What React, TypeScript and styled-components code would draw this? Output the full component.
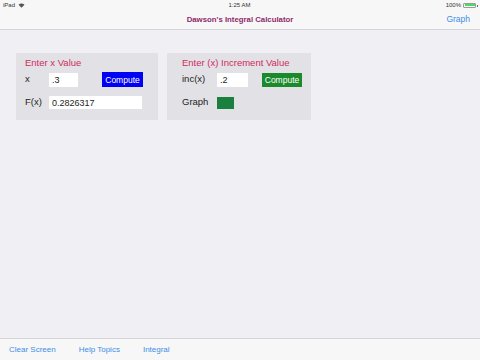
import React from "react";
import styled, { createGlobalStyle } from "styled-components";

const Global = createGlobalStyle`
  html, body { margin: 0; padding: 0; }
  body { font-family: "Liberation Sans", Arial, sans-serif; background: #efeff4; }
  * { box-sizing: border-box; }
`;

const Screen = styled.div`
  width: 480px;
  height: 360px;
  display: flex;
  flex-direction: column;
  background: #efeff4;
  overflow: hidden;
`;

const TopBar = styled.div`
  background: #f7f7f7;
  border-bottom: 1px solid #d6d6da;
  height: 30px;
  display: flex;
  flex-direction: column;
`;

const StatusBar = styled.div`
  height: 10px;
  display: grid;
  grid-template-columns: 1fr auto 1fr;
  align-items: center;
  padding: 0 4px 0 3px;
  font-size: 6px;
  color: #333;
`;

const StatusLeft = styled.div`
  display: flex;
  align-items: center;
  gap: 3px;
`;

const StatusRight = styled.div`
  display: flex;
  align-items: center;
  justify-content: flex-end;
  gap: 2px;
`;

const Battery = styled.div`
  width: 13px;
  height: 5px;
  border: 1px solid #9a9a9a;
  border-radius: 1px;
  padding: 0.5px;
  position: relative;
  &::before {
    content: "";
    display: block;
    width: 100%;
    height: 100%;
    background: #4cd964;
  }
  &::after {
    content: "";
    position: absolute;
    right: -3px;
    top: 1px;
    width: 1px;
    height: 2px;
    background: #666;
  }
`;

const NavBar = styled.div`
  flex: 1;
  display: grid;
  grid-template-columns: 1fr auto 1fr;
  align-items: center;
  padding: 0 10px 0 10px;
`;

const NavTitle = styled.div`
  font-size: 7.8px;
  font-weight: bold;
  color: #8e2a6a;
  padding-bottom: 1px;
`;

const NavButton = styled.div`
  justify-self: end;
  font-size: 8.5px;
  color: #3d8ee8;
  padding-bottom: 1px;
`;

const Content = styled.div`
  flex: 1;
  display: flex;
  align-items: flex-start;
  gap: 9px;
  padding: 23px 0 0 16px;
`;

const Panel = styled.div<{ $w: number; $pl: number }>`
  width: ${(p) => p.$w}px;
  height: 67px;
  background: #e2e2e6;
  padding: 3px 6px 0 ${(p) => p.$pl}px;
  display: flex;
  flex-direction: column;
`;

const PanelTitle = styled.div`
  font-size: 9.5px;
  line-height: 14px;
  color: #d12a5c;
  margin-bottom: 2px;
`;

const Row = styled.div<{ $mt?: number; $h: number }>`
  display: flex;
  align-items: center;
  height: ${(p) => p.$h}px;
  margin-top: ${(p) => p.$mt ?? 0}px;
`;

const Label = styled.div<{ $w: number }>`
  width: ${(p) => p.$w}px;
  font-size: 9.5px;
  color: #222;
  flex-shrink: 0;
  padding-bottom: 2px;
`;

const Field = styled.div<{ $w: number; $h: number }>`
  width: ${(p) => p.$w}px;
  height: ${(p) => p.$h}px;
  background: #fff;
  font-size: 9px;
  color: #222;
  display: flex;
  align-items: center;
  padding-left: 3px;
  flex-shrink: 0;
`;

const Button = styled.div<{ $bg: string; $w: number; $h: number; $ml: number }>`
  width: ${(p) => p.$w}px;
  height: ${(p) => p.$h}px;
  margin-left: ${(p) => p.$ml}px;
  background: ${(p) => p.$bg};
  color: #fff;
  font-size: 8.5px;
  display: flex;
  align-items: center;
  justify-content: center;
  flex-shrink: 0;
`;

const Swatch = styled.div`
  width: 17px;
  height: 12px;
  background: #1a8040;
`;

const BottomBar = styled.div`
  height: 22px;
  background: #f7f7f7;
  border-top: 1px solid #d6d6da;
  display: flex;
  align-items: center;
  padding: 0 0 1px 9px;
  gap: 23px;
`;

const BottomItem = styled.div`
  font-size: 8px;
  color: #3d8ee8;
`;

export default function App() {
  return (
    <Screen>
      <Global />
      <TopBar>
        <StatusBar>
          <StatusLeft>
            <span>iPad</span>
            <svg width="7" height="5" viewBox="0 0 14 10">
              <path d="M7 9.5 L1 3.5 Q7 -1.5 13 3.5 Z" fill="#555" />
            </svg>
          </StatusLeft>
          <span>1:25 AM</span>
          <StatusRight>
            <span>100%</span>
            <Battery />
          </StatusRight>
        </StatusBar>
        <NavBar>
          <span />
          <NavTitle>Dawson's Integral Calculator</NavTitle>
          <NavButton>Graph</NavButton>
        </NavBar>
      </TopBar>
      <Content>
        <Panel $w={142} $pl={9}>
          <PanelTitle>Enter x Value</PanelTitle>
          <Row $h={15}>
            <Label $w={24}>x</Label>
            <Field $w={29} $h={14}>.3</Field>
            <Button $bg="#0000f5" $w={41} $h={15} $ml={24}>Compute</Button>
          </Row>
          <Row $h={13} $mt={9}>
            <Label $w={24}>F(x)</Label>
            <Field $w={93} $h={13}>0.2826317</Field>
          </Row>
        </Panel>
        <Panel $w={144} $pl={15}>
          <PanelTitle>Enter (x) Increment Value</PanelTitle>
          <Row $h={15}>
            <Label $w={35}>inc(x)</Label>
            <Field $w={31} $h={14}>.2</Field>
            <Button $bg="#1b8a2a" $w={40} $h={14} $ml={14}>Compute</Button>
          </Row>
          <Row $h={13} $mt={9}>
            <Label $w={35}>Graph</Label>
            <Swatch />
          </Row>
        </Panel>
      </Content>
      <BottomBar>
        <BottomItem>Clear Screen</BottomItem>
        <BottomItem>Help Topics</BottomItem>
        <BottomItem>Integral</BottomItem>
      </BottomBar>
    </Screen>
  );
}
